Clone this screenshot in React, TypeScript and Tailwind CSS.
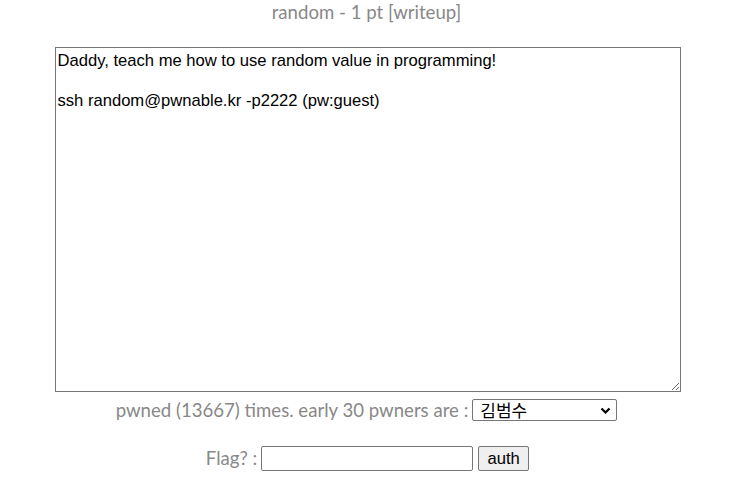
import React from "react";

export default function App() {
  return (
    <div className="flex w-[733px] h-[485px] flex-col items-center bg-white font-['Lato','Open_Sans',sans-serif] text-[#888888]">
      <div className="mt-[1px] h-[23px] text-[18.6px] leading-[23px]">random - 1 pt [writeup]</div>
      <textarea
        className="ml-[2px] mt-[23px] block h-[345px] w-[626px] resize border border-[#767676] pl-[2px] pr-[2px] pt-[3px] pb-[2px] font-['Liberation_Sans',Arial,sans-serif] text-[16.6px] leading-[20px] text-black outline-none"
        defaultValue={"Daddy, teach me how to use random value in programming!\n\nssh random@pwnable.kr -p2222 (pw:guest)"}
      />
      <div className="mt-[7px] flex items-center gap-[4px] text-[18.6px] leading-[22px]">
        <span>pwned (13667) times. early 30 pwners are :</span>
        <div className="relative h-[22px] w-[145px] rounded-[2px] border border-[#767676] bg-white">
          <span className="absolute left-[7px] top-[-1px] font-['Noto_Sans_CJK_KR',sans-serif] text-[17px] leading-[22px] text-black">김범수</span>
          <svg className="absolute right-[5px] top-[7px]" width="11" height="8" viewBox="0 0 11 8">
            <path d="M1.5 1.5 L5.5 5.5 L9.5 1.5" stroke="black" strokeWidth="2.2" fill="none" />
          </svg>
        </div>
      </div>
      <div className="ml-[2px] mt-[25px] flex items-center text-[18.6px] leading-[25px]">
        <span className="mr-[4px]">Flag? :</span>
        <input className="h-[25px] w-[212px] rounded-[2px] border border-[#767676] bg-white outline-none" />
        <button className="ml-[5px] h-[25px] w-[51px] rounded-[2px] border border-[#767676] bg-[#efefef] font-['Liberation_Sans',Arial,sans-serif] text-[16.6px] leading-[20px] text-black">
          auth
        </button>
      </div>
    </div>
  );
}
